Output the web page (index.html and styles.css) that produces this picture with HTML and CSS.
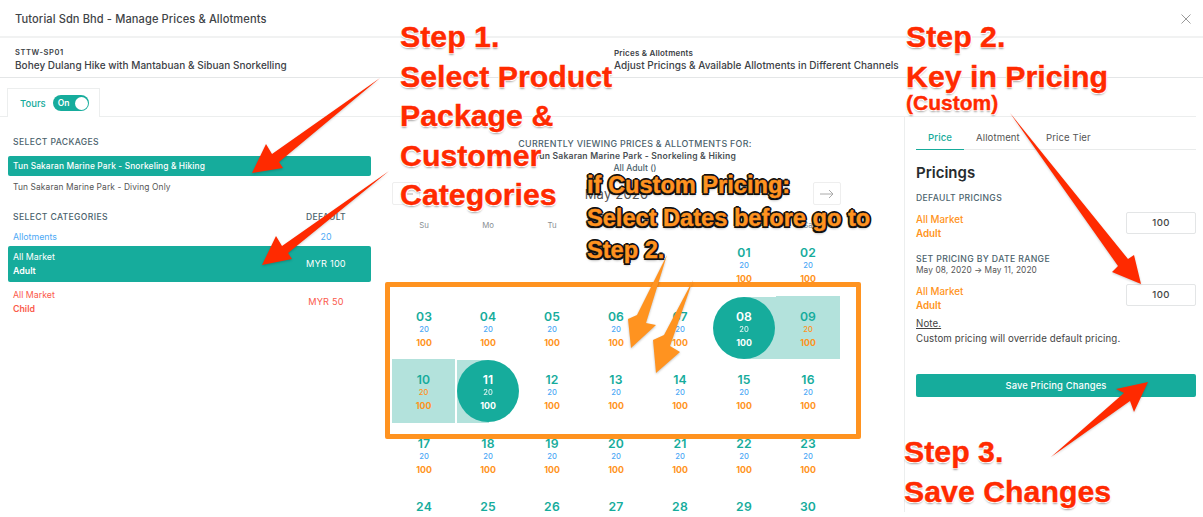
FILE: index.html
```html
<!DOCTYPE html>
<html lang="en">
<head>
<meta charset="utf-8">
<title>Manage Prices &amp; Allotments</title>
<link rel="stylesheet" href="styles.css">
</head>
<body>
<div class="modal">
  <header class="modal-head">
    <h1>Tutorial Sdn Bhd - Manage Prices &amp; Allotments</h1>
    <svg class="close" viewBox="0 0 10 10" width="10" height="10"><path d="M.5.5l9 9M9.5.5l-9 9" stroke="#9a9a9a" stroke-width="1" fill="none"/></svg>
  </header>
  <section class="product">
    <div class="product-a"><div class="eyebrow">STTW-SP01</div><div class="product-name">Bohey Dulang Hike with Mantabuan &amp; Sibuan Snorkelling</div></div>
    <div class="product-b"><div class="eyebrow eyebrow-sm">Prices &amp; Allotments</div><div class="product-name">Adjust Pricings &amp; Available Allotments in Different Channels</div></div>
  </section>
  <nav class="tabs">
    <div class="tab"><span>Tours</span><span class="toggle"><b>On</b><i></i></span></div>
  </nav>
  <main class="cols">
    <aside class="left">
      <h2 class="label">SELECT PACKAGES</h2>
      <div class="pkg pkg-on">Tun Sakaran Marine Park - Snorkeling &amp; Hiking</div>
      <div class="pkg">Tun Sakaran Marine Park - Diving Only</div>
      <div class="cat-head"><h2 class="label">SELECT CATEGORIES</h2><h2 class="label val">DEFAULT</h2></div>
      <div class="allot"><span>Allotments</span><span class="val">20</span></div>
      <div class="cat cat-on"><div>All Market<br><b>Adult</b></div><span class="val">MYR 100</span></div>
      <div class="cat cat-child"><div>All Market<br><b>Child</b></div><span class="val">MYR 50</span></div>
    </aside>
    <section class="mid">
      <div class="viewing">
        <h2 class="label view-title">CURRENTLY VIEWING PRICES &amp; ALLOTMENTS FOR:</h2>
        <div class="view-pkg">Tun Sakaran Marine Park - Snorkeling &amp; Hiking</div>
        <div class="view-cat">All Adult ()</div>
      </div>
      <div class="cal">
        <div class="cal-nav">
          <span class="nav-btn"><svg viewBox="0 0 14 10" width="14" height="10"><path d="M14 5H1M5 1L1 5l4 4" stroke="#aaa" fill="none"/></svg></span>
          <span class="month">May 2020</span>
          <span class="nav-btn"><svg viewBox="0 0 14 10" width="14" height="10"><path d="M0 5h13M9 1l4 4-4 4" stroke="#aaa" fill="none"/></svg></span>
        </div>
        <div class="week"><span>Su</span><span>Mo</span><span>Tu</span><span>We</span><span>Th</span><span>Fr</span><span>Sa</span></div>
        <div class="days">
          <div class="day blank"></div><div class="day blank"></div><div class="day blank"></div><div class="day blank"></div><div class="day blank"></div>
          <div class="day"><b>01</b><i>20</i><em>100</em></div>
          <div class="day"><b>02</b><i>20</i><em>100</em></div>
          <div class="day"><b>03</b><i>20</i><em>100</em></div>
          <div class="day"><b>04</b><i>20</i><em>100</em></div>
          <div class="day"><b>05</b><i>20</i><em>100</em></div>
          <div class="day"><b>06</b><i>20</i><em>100</em></div>
          <div class="day"><b>07</b><i>20</i><em>100</em></div>
          <div class="day sel sel-start"><b>08</b><i>20</i><em>100</em></div>
          <div class="day range"><b>09</b><i>20</i><em>100</em></div>
          <div class="day range"><b>10</b><i>20</i><em>100</em></div>
          <div class="day sel sel-end"><b>11</b><i>20</i><em>100</em></div>
          <div class="day"><b>12</b><i>20</i><em>100</em></div>
          <div class="day"><b>13</b><i>20</i><em>100</em></div>
          <div class="day"><b>14</b><i>20</i><em>100</em></div>
          <div class="day"><b>15</b><i>20</i><em>100</em></div>
          <div class="day"><b>16</b><i>20</i><em>100</em></div>
          <div class="day"><b>17</b><i>20</i><em>100</em></div>
          <div class="day"><b>18</b><i>20</i><em>100</em></div>
          <div class="day"><b>19</b><i>20</i><em>100</em></div>
          <div class="day"><b>20</b><i>20</i><em>100</em></div>
          <div class="day"><b>21</b><i>20</i><em>100</em></div>
          <div class="day"><b>22</b><i>20</i><em>100</em></div>
          <div class="day"><b>23</b><i>20</i><em>100</em></div>
          <div class="day day-last"><b>24</b></div>
          <div class="day day-last"><b>25</b></div>
          <div class="day day-last"><b>26</b></div>
          <div class="day day-last"><b>27</b></div>
          <div class="day day-last"><b>28</b></div>
          <div class="day day-last"><b>29</b></div>
          <div class="day day-last"><b>30</b></div>
        </div>
      </div>
    </section>
    <aside class="right">
      <div class="rtabs"><span class="rtab rtab-on">Price</span><span class="rtab">Allotment</span><span class="rtab">Price Tier</span></div>
      <h3>Pricings</h3>
      <h2 class="label">DEFAULT PRICINGS</h2>
      <div class="price-row price-def"><div>All Market<br><b>Adult</b></div><div class="input">100</div></div>
      <h2 class="label range-label">SET PRICING BY DATE RANGE</h2>
      <div class="dates">May 08, 2020 → May 11, 2020</div>
      <div class="price-row"><div>All Market<br><b>Adult</b></div><div class="input">100</div></div>
      <div class="note"><u>Note.</u><br>Custom pricing will override default pricing.</div>
      <button class="save">Save Pricing Changes</button>
    </aside>
  </main>
</div>

<div class="focus-box"></div>
<svg class="arrows" viewBox="0 0 1203 517" width="1203" height="517">
  <g class="red">
    <polygon points="380,78 272,154 266,144 252,173 283,168 279,162"/>
    <polygon points="389,171 282,246 276,236 262,265 292,259 288,253"/>
    <polygon points="1010,113 1128,259 1134,255 1141,284 1112,272 1118,266"/>
    <polygon points="1051,457 1124,393 1116,389 1148,382 1134,412 1130,401"/>
  </g>
  <g class="amber">
    <polygon points="667,255 637,315 628,319 631,348 656,325 646,323"/>
    <polygon points="693,280 664,335 653,340 656,373 680,352 670,346"/>
  </g>
</svg>
<div class="note-red step1">Step 1.<br>Select Product<br>Package &amp;<br>Customer<br>Categories</div>
<div class="note-red step2">Step 2.<br>Key in Pricing<br><small>(Custom)</small></div>
<div class="note-red step3">Step 3.<br>Save Changes</div>
<div class="note-amber">if Custom Pricing:<br>Select Dates before go to<br>Step 2.</div>
</body>
</html>
```
FILE: styles.css
```css
* { box-sizing: border-box; }
html, body { margin: 0; padding: 0; }
body {
  width: 1203px; height: 517px; overflow: hidden; position: relative;
  background: #fff; color: #3c4146;
  font-family: Inter, "Liberation Sans", sans-serif; font-size: 9px;
}
h1, h2, h3 { margin: 0; font-weight: 500; }
.modal { display: flex; flex-direction: column; height: 517px; overflow: hidden; }
.modal-head {
  height: 38px; flex: none; display: flex; align-items: center; justify-content: space-between;
  padding: 1px 12px 0 15px; border-bottom: 2px solid #f1f2f2;
}
.modal-head h1 { font-size: 11.1px; letter-spacing: .1px; color: #3f4448; }
.product { height: 40px; flex: none; display: flex; padding: 10px 0 0 15px; border-bottom: 1px solid #e4e6e7; }
.product-a { width: 599px; }
.eyebrow { font-size: 7.5px; font-weight: 600; letter-spacing: .6px; line-height: 10px; color: #3c4146; }
.eyebrow-sm { font-size: 8px; letter-spacing: .2px; }
.product-name { font-size: 10px; font-weight: 500; line-height: 15px; letter-spacing: .02px; white-space: nowrap; }
.tabs { height: 39px; flex: none; padding: 10px 7px 0; border-bottom: 1px solid #eceeee; width: 1196px; }
.tab {
  width: 93px; height: 29px; display: flex; align-items: center; gap: 7px; padding: 0 0 0 12px;
  border: 1px solid #eceeee; border-bottom: 0; color: #17ab9b; font-size: 9.5px; font-weight: 500; background: #fff;
}
.toggle {
  width: 36px; height: 16px; border-radius: 8px; background: #16ac9c; position: relative;
  display: flex; align-items: center; padding-left: 5px; color: #fff;
}
.toggle b { font-size: 8.5px; font-weight: 600; }
.toggle i { position: absolute; right: 1px; top: 1.5px; width: 13px; height: 13px; border-radius: 50%; background: #fff; }
.cols { flex: 1; display: flex; min-height: 0; }
.left { width: 385px; flex: none; padding: 19px 14px 0 8px; }
.label { font-size: 8.6px; letter-spacing: .35px; color: #4b626c; font-weight: 500; line-height: 12px; }
.left > .label { padding-left: 5px; margin-bottom: 8px; }
.pkg { height: 20px; width: 363px; padding-left: 5px; display: flex; align-items: center; font-size: 8.4px; letter-spacing: .12px; color: #555; margin-bottom: 1px; }
.pkg-on { background: #16ac9c; color: #fff; border-radius: 2px; font-weight: 500; }
.cat-head { display: flex; justify-content: space-between; margin-top: 14px; padding: 0 12px 0 5px; width: 363px; }
.val { width: 66px; text-align: center; flex: none; white-space: nowrap; }
.allot { display: flex; justify-content: space-between; width: 363px; padding: 0 12px 0 5px; margin-top: 8px; color: #4da9f5; font-size: 8.8px; line-height: 12px; }
.cat {
  display: flex; justify-content: space-between; align-items: center; width: 363px; height: 36px;
  padding: 0 12px 0 5px; font-size: 8.8px; line-height: 14px; margin-top: 3px; border-radius: 2px;
}
.cat .val { font-size: 9.2px; letter-spacing: .2px; }
.cat b { font-weight: 600; }
.cat-on { background: #16ac9c; color: #fff; }
.cat-child { color: #fb5a4b; margin-top: 2px; }
.mid { width: 519px; flex: none; padding: 0 0 0 7px; position: relative; }
.viewing { width: 500px; margin-left: -7px; text-align: center; padding-top: 20px; }
.view-title { line-height: 13px; font-size: 8.9px; letter-spacing: .28px; }
.view-pkg { font-size: 8.6px; font-weight: 600; line-height: 12px; letter-spacing: .2px; color: #4a4f54; }
.view-cat { font-size: 8.6px; font-weight: 500; line-height: 13px; color: #4b626c; }
.cal { width: 449px; margin-top: 7px; }
.cal-nav { display: flex; align-items: center; justify-content: space-between; height: 23px; }
.nav-btn { width: 28px; height: 23px; border: 1px solid #eee; border-radius: 2px; display: flex; align-items: center; justify-content: center; }
.month { font-size: 13px; color: #555; letter-spacing: .2px; }
.week { display: grid; grid-template-columns: repeat(7, 64px); margin-top: 13px; height: 14px; color: #8a8f93; font-size: 7.8px; text-align: center; align-items: center; }
.days { display: grid; grid-template-columns: repeat(7, 64px); grid-template-rows: repeat(4, 63.5px) 30px; }
.day { display: flex; flex-direction: column; align-items: center; justify-content: center; position: relative; padding-top: 4px; }
.day-last { justify-content: flex-start; padding-top: 14px; }
.day b { font-size: 12.2px; font-weight: 600; color: #16ac9c; line-height: 13px; letter-spacing: .2px; position: relative; }
.day i { font-style: normal; font-size: 7.6px; font-weight: 500; color: #4da9f5; line-height: 13px; position: relative; }
.day em { font-style: normal; font-size: 8.8px; font-weight: 700; color: #ff9320; line-height: 13px; position: relative; }
.range { background: #b3e2dc; }
.range i { color: #ff9320; }
.days .range:nth-child(15) { margin-right: 1px; }
.sel::after { content: ""; position: absolute; left: 1px; top: 1px; width: 62px; height: 62px; border-radius: 50%; background: #16ac9c; }
.sel::before { content: ""; position: absolute; top: 1px; bottom: 0; width: 32px; background: #b3e2dc; }
.sel-start::before { right: 0; }
.sel-end::before { left: 1px; }
.sel b, .sel i, .sel em { color: #fff; z-index: 1; }
.sel i { opacity: .85; }
.right { width: 292px; flex: none; border-left: 1px solid #eceeee; padding: 15px 0 0 11px; height: 395px; }
.rtabs { display: flex; border-bottom: 1px solid #e9ebeb; height: 18px; margin-bottom: 14px; }
.rtab { font-size: 9.6px; color: #555; letter-spacing: .1px; padding: 0 12px; height: 18px; }
.rtab-on { color: #17ab9b; border-bottom: 1px solid #17ab9b; width: 48px; text-align: center; font-weight: 500; }
.rtab:nth-child(2) { width: 70px; padding-left: 12px; white-space: nowrap; }
.rtab:nth-child(3) { padding-left: 12px; white-space: nowrap; }
.right h3 { font-size: 15px; font-weight: 600; color: #272b2e; line-height: 18px; margin-bottom: 10px; }
.price-row { display: flex; justify-content: space-between; align-items: flex-start; color: #ff9320; font-size: 9.8px; line-height: 14px; font-weight: 500; margin-top: 9px; }
.price-row b { font-weight: 600; }
.price-def { margin-top: 9px; }
.input { width: 70px; height: 22px; border: 1px solid #e3e5e6; border-radius: 2px; color: #444; font-size: 9.6px; display: flex; align-items: center; justify-content: center; margin-top: -1px; letter-spacing: .3px; }
.range-label { margin-top: 12px; font-size: 8.7px; }
.dates { font-size: 8.3px; color: #555; line-height: 12px; letter-spacing: .1px; margin-top: -1px; }
.dates + .price-row { margin-top: 9px; }
.note { font-size: 9.7px; color: #444; line-height: 15px; margin-top: 3px; letter-spacing: .1px; }
.save {
  display: block; width: 280px; height: 23px; margin-top: 28px; border: 0; border-radius: 2px;
  background: #16ac9c; color: #fff; font: 500 9.4px Inter, "Liberation Sans", sans-serif; letter-spacing: .15px;
}
.focus-box { position: absolute; left: 385px; top: 282px; width: 476px; height: 157px; border: 5px solid #ff9320; border-radius: 2px; }
.arrows { position: absolute; left: 0; top: 0; }
.red polygon { fill: #ff2a00; filter: drop-shadow(0 1px 1px rgba(0,0,0,.2)); }
.amber polygon { fill: #ff9320; filter: drop-shadow(0 1px 1px rgba(0,0,0,.25)); }
.note-red, .note-amber { position: absolute; font-family: "Liberation Sans", Arial, sans-serif; font-weight: 700; white-space: nowrap; }
.note-red {
  color: #ff2a00; font-size: 30.3px; line-height: 39.5px; -webkit-text-stroke: .4px #ff2a00;
  text-shadow: 1px 0 0 #fff, -1px 0 0 #fff, 0 1px 0 #fff, 0 -1px 0 #fff, 1px 1px 0 #fff, -1px 1px 0 #fff, 1px -1px 0 #fff, -1px -1px 0 #fff, 0 2px 2px rgba(0,0,0,.35);
}
.note-red small { font-size: 21px; display: block; line-height: 18px; margin-top: -2px; }
.step1 { left: 400px; top: 17px; }
.step2 { left: 906px; top: 17px; }
.step3 { left: 904px; top: 432px; }
.note-amber {
  left: 587px; top: 169px; color: #ff9320; font-size: 23.6px; line-height: 32.5px; -webkit-text-stroke: .4px #ff9320;
  text-shadow: 2px 0 0 #111, -2px 0 0 #111, 0 2px 0 #111, 0 -2px 0 #111, 1.5px 1.5px 0 #111, -1.5px 1.5px 0 #111, 1.5px -1.5px 0 #111, -1.5px -1.5px 0 #111, 0 2px 3px rgba(0,0,0,.5);
}
```
